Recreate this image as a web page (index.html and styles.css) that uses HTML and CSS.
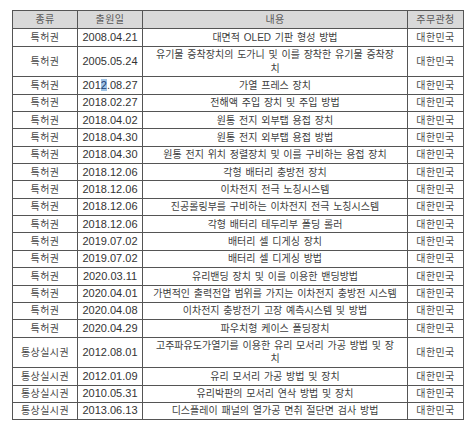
FILE: index.html
```html
<!DOCTYPE html>
<html lang="ko">
<head>
<meta charset="utf-8">
<title>지식재산권 현황</title>
<link rel="stylesheet" href="styles.css">
</head>
<body>
<table class="ip-table">
  <colgroup>
    <col class="c-type">
    <col class="c-date">
    <col class="c-desc">
    <col class="c-office">
  </colgroup>
  <thead>
    <tr><th>종류</th><th>출원일</th><th>내용</th><th>주무관청</th></tr>
  </thead>
  <tbody>
    <tr><td class="kind">특허권</td><td class="date">2008.04.21</td><td class="desc">대면적 OLED 기판 형성 방법</td><td class="office">대한민국</td></tr>
    <tr><td class="kind">특허권</td><td class="date">2005.05.24</td><td class="desc wrap">유기물 증착장치의 도가니 및 이를 장착한 유기물 증착장<br>치</td><td class="office">대한민국</td></tr>
    <tr><td class="kind">특허권</td><td class="date">201<span class="sel">2</span>.08.27</td><td class="desc">가열 프레스 장치</td><td class="office">대한민국</td></tr>
    <tr><td class="kind">특허권</td><td class="date">2018.02.27</td><td class="desc">전해액 주입 장치 및 주입 방법</td><td class="office">대한민국</td></tr>
    <tr><td class="kind">특허권</td><td class="date">2018.04.02</td><td class="desc">원통 전지 외부탭 용접 장치</td><td class="office">대한민국</td></tr>
    <tr><td class="kind">특허권</td><td class="date">2018.04.30</td><td class="desc">원통 전지 외부탭 용접 방법</td><td class="office">대한민국</td></tr>
    <tr><td class="kind">특허권</td><td class="date">2018.04.30</td><td class="desc">원통 전지 위치 정렬장치 및 이를 구비하는 용접 장치</td><td class="office">대한민국</td></tr>
    <tr><td class="kind">특허권</td><td class="date">2018.12.06</td><td class="desc">각형 배터리 충방전 장치</td><td class="office">대한민국</td></tr>
    <tr><td class="kind">특허권</td><td class="date">2018.12.06</td><td class="desc">이차전지 전극 노칭시스템</td><td class="office">대한민국</td></tr>
    <tr><td class="kind">특허권</td><td class="date">2018.12.06</td><td class="desc">진공롤링부를 구비하는 이차전지 전극 노칭시스템</td><td class="office">대한민국</td></tr>
    <tr><td class="kind">특허권</td><td class="date">2018.12.06</td><td class="desc">각형 배터리 테두리부 폴딩 롤러</td><td class="office">대한민국</td></tr>
    <tr><td class="kind">특허권</td><td class="date">2019.07.02</td><td class="desc">배터리 셀 디게싱 장치</td><td class="office">대한민국</td></tr>
    <tr><td class="kind">특허권</td><td class="date">2019.07.02</td><td class="desc">배터리 셀 디게싱 방법</td><td class="office">대한민국</td></tr>
    <tr><td class="kind">특허권</td><td class="date">2020.03.11</td><td class="desc">유리밴딩 장치 및 이를 이용한 밴딩방법</td><td class="office">대한민국</td></tr>
    <tr><td class="kind">특허권</td><td class="date">2020.04.01</td><td class="desc">가변적인 출력전압 범위를 가지는 이차전지 충방전 시스템</td><td class="office">대한민국</td></tr>
    <tr><td class="kind">특허권</td><td class="date">2020.04.08</td><td class="desc">이차전지 충방전기 고장 예측시스템 및 방법</td><td class="office">대한민국</td></tr>
    <tr><td class="kind">특허권</td><td class="date">2020.04.29</td><td class="desc">파우치형 케이스 폴딩장치</td><td class="office">대한민국</td></tr>
    <tr><td class="kind">통상실시권</td><td class="date">2012.08.01</td><td class="desc wrap">고주파유도가열기를 이용한 유리 모서리 가공 방법 및 장<br>치</td><td class="office">대한민국</td></tr>
    <tr><td class="kind">통상실시권</td><td class="date">2012.01.09</td><td class="desc">유리 모서리 가공 방법 및 장치</td><td class="office">대한민국</td></tr>
    <tr><td class="kind">통상실시권</td><td class="date">2010.05.31</td><td class="desc">유리박판의 모서리 연삭 방법 및 장치</td><td class="office">대한민국</td></tr>
    <tr><td class="kind">통상실시권</td><td class="date">2013.06.13</td><td class="desc">디스플레이 패널의 열가공 면취 절단면 검사 방법</td><td class="office">대한민국</td></tr>
  </tbody>
</table>
</body>
</html>
```

FILE: styles.css
```css
html, body {
  margin: 0;
  padding: 0;
  background: #ffffff;
}

body {
  padding: 10px 0 0 12px;
  font-family: "Liberation Sans", "Noto Sans CJK KR", sans-serif;
  color: #3a3a3a;
}

.ip-table {
  border-collapse: collapse;
  table-layout: fixed;
  width: 451px;
  font-size: 10px;
  border: 1px solid #4a4a4a;
}

.c-type { width: 65px; }
.c-date { width: 65px; }
.c-desc { width: 265px; }
.c-office { width: 56px; }

.ip-table th,
.ip-table td {
  border: 1px solid #555555;
  text-align: center;
  vertical-align: middle;
  line-height: 13.35px;
  padding: 1.5px 1px;
  white-space: nowrap;
  overflow: hidden;
}

.ip-table th {
  background: #d9d9d9;
  color: #5a5a5a;
  font-weight: normal;
  padding: 2px 1px;
  letter-spacing: 0.4px;
}

.ip-table td {
  color: #4a4a4a;
}

.ip-table td.kind,
.ip-table td.office {
  letter-spacing: 0.4px;
}

.ip-table td.date {
  font-size: 11px;
  color: #333333;
}

.ip-table td.desc {
  color: #404040;
  word-spacing: 1px;
}

.ip-table td.wrap {
  white-space: normal;
}

.sel {
  background: #9fc3e6;
  color: #1d3f73;
}
```
